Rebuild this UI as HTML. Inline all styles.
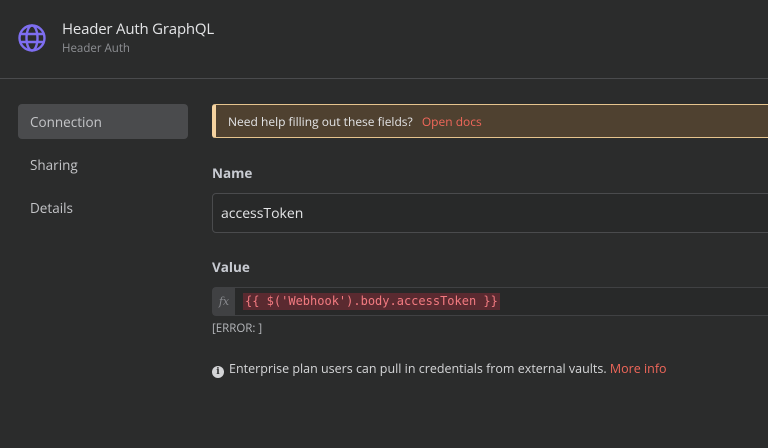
<!DOCTYPE html>
<html><head><meta charset="utf-8"><style>
*{box-sizing:border-box;margin:0;padding:0}
body{width:768px;height:448px;overflow:hidden;background:#2b2c2c;font-family:"Open Sans","DejaVu Sans","Liberation Sans",sans-serif;color:#d4d5d7;position:relative}
.hdr{position:absolute;left:0;top:0;width:768px;height:79px;border-bottom:1px solid #4a4b4d}
.t1{position:absolute;left:62px;top:19px;font-size:15px;color:#e4e5e7;letter-spacing:-0.2px}
.t2{position:absolute;left:62px;top:41px;font-size:11.5px;color:#8e9094}
.nav{position:absolute;left:18px;width:170px;height:35px;font-size:13.5px;color:#c4c5c8;padding:9px 12px;border-radius:4px}
.nav.a{background:#4a4b4d}
.banner{position:absolute;left:212px;top:104px;width:560px;height:34px;background:#4f4130;border:1px solid #e6c48e;border-right:none;border-left:4px solid #f5d3a0;border-radius:3px 0 0 3px;font-size:12px;color:#e4e5e7;padding:8px 12px}
.banner span{color:#f0675a;margin-left:6px}
.lbl{position:absolute;left:212px;font-size:13.5px;color:#c8cbd2;font-weight:bold}
.inp{position:absolute;left:212px;top:193px;width:570px;height:40px;border:1px solid #4a4b4d;border-radius:4px;background:#282929;font-size:14px;color:#e4e5e7;padding:10px 8px}
.val{position:absolute;left:212px;top:287px;width:570px;height:29px;border:1px solid #404143;border-radius:4px;background:#282929}
.fx{position:absolute;left:0;top:0;width:22px;height:27px;background:#404143;color:#888a8e;font-family:"DejaVu Serif",serif;font-style:italic;font-size:11px;text-align:center;line-height:27px}
.code{position:absolute;left:30px;top:5px;height:17px;background:#5a2a30;color:#f27a80;font-family:"DejaVu Sans Mono","Liberation Mono",monospace;font-size:12px;line-height:17px;padding:0 2px}
.err{position:absolute;left:212px;top:321px;font-size:11.5px;color:#b4b6ba}
.info{position:absolute;left:212px;top:360px;font-size:12.5px;color:#d4d5d7}
.info span{color:#f0675a}
.ic{display:inline-block;width:12px;height:12px;border-radius:50%;background:#d4d5d7;color:#2b2c2c;font-size:9px;font-weight:bold;text-align:center;line-height:12px;margin-right:5px;vertical-align:-1px;font-family:"DejaVu Serif",serif}
</style></head><body>
<div class="hdr">
<svg style="position:absolute;left:17px;top:23px" width="30" height="30" viewBox="0 0 30 30" fill="none" stroke="#7e6ef0" stroke-width="2.4">
<circle cx="15" cy="15" r="12.5"/><ellipse cx="15" cy="15" rx="5.5" ry="12.5"/><line x1="3" y1="11" x2="27" y2="11"/><line x1="3" y1="19" x2="27" y2="19"/></svg>
<div class="t1">Header Auth GraphQL</div>
<div class="t2">Header Auth</div>
</div>
<div class="nav a" style="top:104px">Connection</div>
<div class="nav" style="top:147px">Sharing</div>
<div class="nav" style="top:190px">Details</div>
<div class="banner">Need help filling out these fields? <span>Open docs</span></div>
<div class="lbl" style="top:164px">Name</div>
<div class="inp">accessToken</div>
<div class="lbl" style="top:258px">Value</div>
<div class="val"><div class="fx">fx</div><div class="code">{{ $('Webhook').body.accessToken }}</div></div>
<div class="err">[ERROR: ]</div>
<div class="info"><span class="ic" style="color:#2b2c2c">i</span>Enterprise plan users can pull in credentials from external vaults. <span>More info</span></div>
</body></html>
